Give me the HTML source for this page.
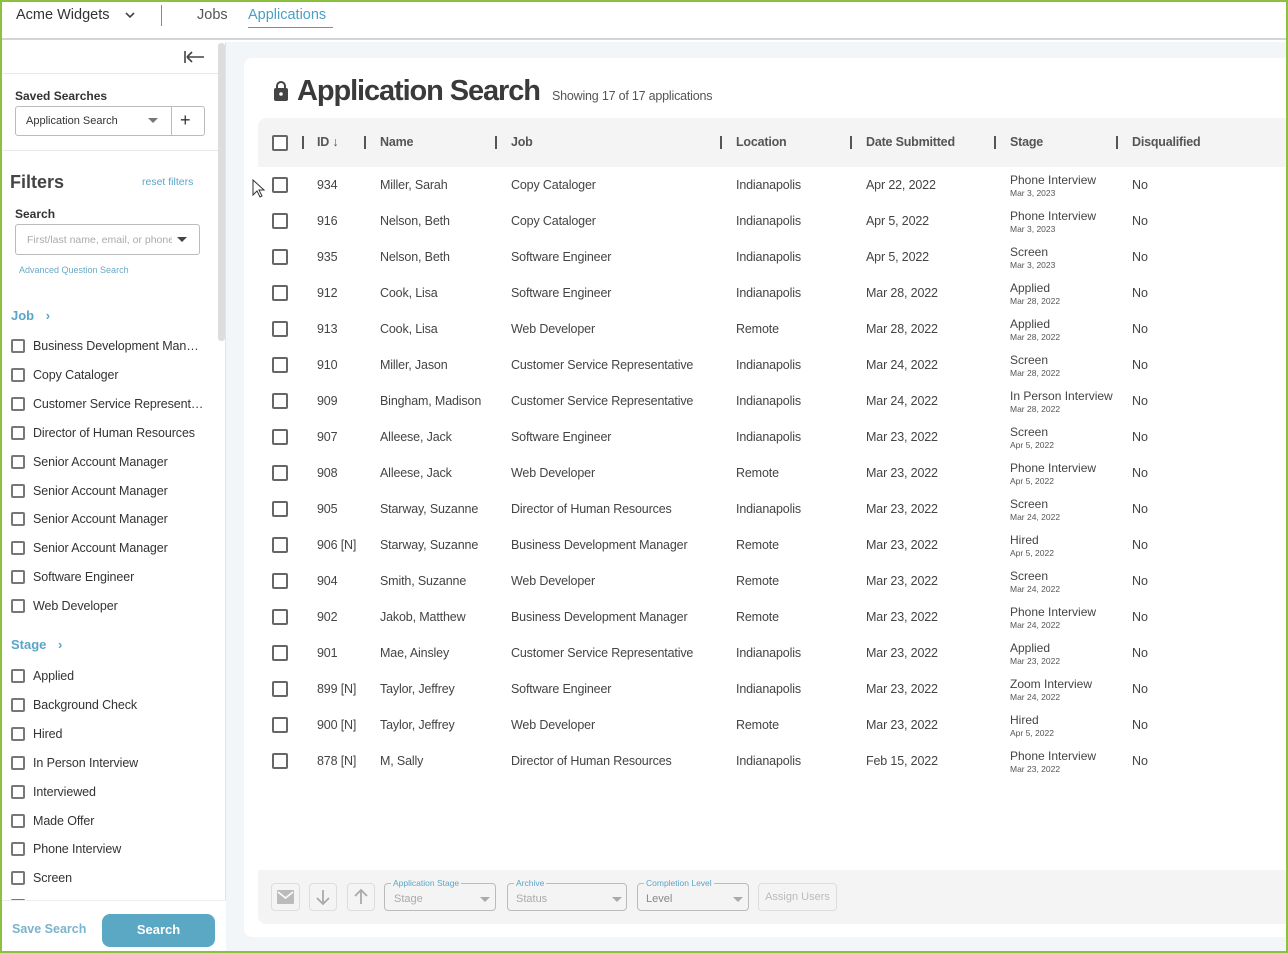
<!DOCTYPE html>
<html><head><meta charset="utf-8"><style>
*{box-sizing:border-box;margin:0;padding:0}
body{width:1288px;height:953px;overflow:hidden;font-family:"Liberation Sans",sans-serif;color:#444;background:#fff;position:relative}
.a{position:absolute;white-space:nowrap}
.frame{position:absolute;left:0;top:0;width:1288px;height:953px;border:2px solid #8cc13f;pointer-events:none;z-index:10}
.cb{position:absolute;width:16px;height:16px;border:2px solid #666;border-radius:2px;background:#fff}
.scb{position:absolute;width:14px;height:14px;border:2px solid #777;border-radius:2px}
.t{font-size:12.5px;color:#444}
.hd{font-size:12.5px;font-weight:bold;color:#555;letter-spacing:-0.2px}
.sep{position:absolute;width:2px;height:13px;background:#555}
.sm{font-size:8.5px;color:#555}
</style></head><body>
<div class="a" style="left:0;top:0;width:1288px;height:40px;background:#fff;border-bottom:2px solid #d4d4d4"></div>
<div class="a" style="left:16px;top:7px;font-size:14.5px;color:#333">Acme Widgets</div>
<svg class="a" style="left:124px;top:10px" width="12" height="10"><path d="M2 3l4 4 4-4" stroke="#444" stroke-width="1.6" fill="none"/></svg>
<div class="a" style="left:161px;top:5px;width:1px;height:21px;background:#4a9fc4"></div>
<div class="a" style="left:197px;top:7px;font-size:14.5px;color:#555">Jobs</div>
<div class="a" style="left:248px;top:7px;font-size:14.5px;color:#4a9fc4">Applications</div>
<div class="a" style="left:248px;top:27px;width:85px;height:1px;background:#4a9fc4"></div>
<div class="a" style="left:226px;top:42px;width:1062px;height:911px;background:#f2f6f8"></div>
<div class="a" style="left:0;top:42px;width:226px;height:911px;background:#fff;border-right:1px solid #e3e3e3"></div>
<div class="a" style="left:218px;top:43px;width:7px;height:298px;background:#ddd;border-radius:3px"></div>
<svg class="a" style="left:183px;top:50px" width="22" height="14"><path d="M2 1v12M4 7h17M4 7l5-5M4 7l5 5" stroke="#444" stroke-width="1.6" fill="none"/></svg>
<div class="a" style="left:2px;top:73px;width:216px;height:1px;background:#e8e8e8"></div>
<div class="a" style="left:15px;top:89px;font-size:12px;font-weight:bold;color:#333">Saved Searches</div>
<div class="a" style="left:15px;top:106px;width:190px;height:30px;border:1px solid #bbb;border-radius:3px"></div>
<div class="a" style="left:171px;top:107px;width:1px;height:28px;background:#bbb"></div>
<div class="a" style="left:26px;top:115px;font-size:11px;color:#333">Application Search</div>
<svg class="a" style="left:148px;top:118px" width="10" height="6"><path d="M0 0h10L5 5z" fill="#777"/></svg>
<div class="a" style="left:180px;top:110px;font-size:18px;color:#333">+</div>
<div class="a" style="left:2px;top:150px;width:216px;height:1px;background:#e8e8e8"></div>
<div class="a" style="left:10px;top:172px;font-size:18px;font-weight:bold;color:#444">Filters</div>
<div class="a" style="left:142px;top:176px;font-size:10.5px;color:#5aa6c8">reset filters</div>
<div class="a" style="left:15px;top:207px;font-size:12px;font-weight:bold;color:#333">Search</div>
<div class="a" style="left:15px;top:224px;width:185px;height:31px;border:1px solid #bbb;border-radius:3px"></div>
<div class="a" style="left:27px;top:234px;font-size:10.5px;color:#aaa;width:145px;overflow:hidden">First/last name, email, or phone</div>
<svg class="a" style="left:177px;top:237px" width="10" height="6"><path d="M0 0h10L5 5z" fill="#444"/></svg>
<div class="a" style="left:19px;top:265px;font-size:9px;color:#6aa9c6">Advanced Question Search</div>
<div class="a" style="left:11px;top:308px;font-size:13px;font-weight:bold;color:#5aa6c8">Job <span style="margin-left:8px">›</span></div>
<div id="jobs"></div>
<div class="a" style="left:11px;top:637px;font-size:13px;font-weight:bold;color:#5aa6c8">Stage <span style="margin-left:8px">›</span></div>
<div class="a" style="left:2px;top:900px;width:224px;height:51px;background:#fff;border-top:1px solid #eee"></div>
<div class="a" style="left:12px;top:922px;font-size:12.5px;font-weight:bold;color:#7ab3cc">Save Search</div>
<div class="a" style="left:102px;top:914px;width:113px;height:33px;background:#5ba8c4;border-radius:8px;color:#fff;font-size:13px;font-weight:bold;text-align:center;line-height:31px">Search</div>
<div class="a" style="left:244px;top:58px;width:1050px;height:879px;background:#fff;border-radius:8px"></div>
<svg class="a" style="left:273px;top:80px" width="16" height="22"><rect x="1" y="8" width="14" height="13" rx="2" fill="#444"/><path d="M4 9V6a4 4 0 0 1 8 0v3" stroke="#444" stroke-width="2" fill="none"/><circle cx="8" cy="14" r="1.8" fill="#fff"/></svg>
<div class="a" style="left:297px;top:75px;font-size:29px;font-weight:bold;color:#3a3a3a;letter-spacing:-1.1px">Application Search</div>
<div class="a" style="left:552px;top:89px;font-size:12.5px;color:#555;letter-spacing:-0.2px">Showing 17 of 17 applications</div>
<div class="a" style="left:258px;top:118px;width:1030px;height:49px;background:#f4f4f4;border-radius:8px 0 0 0"></div>
<div class="a" style="left:258px;top:870px;width:1030px;height:54px;background:#f4f4f4;border-radius:0 0 0 8px"></div>
<div class="cb" style="left:272px;top:135px"></div>
<div class="sep" style="left:302px;top:136px"></div>
<div class="a hd" style="left:317px;top:135px">ID <span style="font-weight:normal">↓</span></div>
<div class="sep" style="left:364px;top:136px"></div><div class="a hd" style="left:380px;top:135px">Name</div>
<div class="sep" style="left:495px;top:136px"></div><div class="a hd" style="left:511px;top:135px">Job</div>
<div class="sep" style="left:720px;top:136px"></div><div class="a hd" style="left:736px;top:135px">Location</div>
<div class="sep" style="left:850px;top:136px"></div><div class="a hd" style="left:866px;top:135px">Date Submitted</div>
<div class="sep" style="left:994px;top:136px"></div><div class="a hd" style="left:1010px;top:135px">Stage</div>
<div class="sep" style="left:1116px;top:136px"></div><div class="a hd" style="left:1132px;top:135px">Disqualified</div>
<div id="rows"></div>
<svg class="a" style="left:252px;top:179px" width="13" height="20"><path d="M1 1v15l4-4 3 6 2-1-3-6h5z" fill="#fff" stroke="#333" stroke-width="1"/></svg>
<div class="a" style="left:271px;top:883px;width:29px;height:28px;border:1px solid #ddd;border-radius:4px"></div>
<svg class="a" style="left:277px;top:890px" width="17" height="14"><rect x="0" y="0" width="17" height="14" rx="1" fill="#bbb"/><path d="M1 2l7.5 6L16 2" stroke="#fff" stroke-width="1.5" fill="none"/></svg>
<div class="a" style="left:309px;top:883px;width:28px;height:28px;border:1px solid #ddd;border-radius:4px"></div>
<svg class="a" style="left:315px;top:888px" width="16" height="18"><path d="M8 2v14M2 10l6 6 6-6" stroke="#aaa" stroke-width="1.8" fill="none"/></svg>
<div class="a" style="left:347px;top:883px;width:28px;height:28px;border:1px solid #ddd;border-radius:4px"></div>
<svg class="a" style="left:353px;top:888px" width="16" height="18"><path d="M8 16V2M2 8l6-6 6 6" stroke="#aaa" stroke-width="1.8" fill="none"/></svg>
<div class="a" style="left:384px;top:883px;width:112px;height:28px;border:1px solid #bbb;border-radius:4px"></div>
<div class="a" style="left:391px;top:878px;font-size:8.5px;color:#5aa6c8;background:#f4f4f4;padding:0 2px">Application Stage</div>
<div class="a" style="left:394px;top:893px;font-size:11px;color:#aaa">Stage</div>
<svg class="a" style="left:480px;top:897px" width="10" height="5"><path d="M0 0h10L5 5z" fill="#aaa"/></svg>
<div class="a" style="left:507px;top:883px;width:120px;height:28px;border:1px solid #bbb;border-radius:4px"></div>
<div class="a" style="left:514px;top:878px;font-size:8.5px;color:#5aa6c8;background:#f4f4f4;padding:0 2px">Archive</div>
<div class="a" style="left:516px;top:893px;font-size:11px;color:#aaa">Status</div>
<svg class="a" style="left:612px;top:897px" width="10" height="5"><path d="M0 0h10L5 5z" fill="#aaa"/></svg>
<div class="a" style="left:637px;top:883px;width:112px;height:28px;border:1px solid #bbb;border-radius:4px"></div>
<div class="a" style="left:644px;top:878px;font-size:8.5px;color:#5aa6c8;background:#f4f4f4;padding:0 2px">Completion Level</div>
<div class="a" style="left:646px;top:893px;font-size:11px;color:#888">Level</div>
<svg class="a" style="left:733px;top:897px" width="10" height="5"><path d="M0 0h10L5 5z" fill="#aaa"/></svg>
<div class="a" style="left:758px;top:883px;width:79px;height:28px;border:1px solid #ddd;border-radius:4px;color:#bbb;font-size:11px;text-align:center;line-height:26px">Assign Users</div>
<div class="frame"></div>
<script>
var jobs=["Business Development Man…","Copy Cataloger","Customer Service Represent…","Director of Human Resources","Senior Account Manager","Senior Account Manager","Senior Account Manager","Senior Account Manager","Software Engineer","Web Developer"];
var stages=["Applied","Background Check","Hired","In Person Interview","Interviewed","Made Offer","Phone Interview","Screen"];
var h="";
function item(t,y){return '<div class="scb" style="left:11px;top:'+(y-7)+'px"></div><div class="a" style="left:33px;top:'+(y-7)+'px;font-size:12.5px;color:#333;letter-spacing:-0.1px">'+t+'</div>';}
jobs.forEach(function(t,i){h+=item(t,346+i*28.9)});
stages.forEach(function(t,i){h+=item(t,676+i*28.9)});
h+='<div class="scb" style="left:11px;top:899px;height:3px;border-bottom:none"></div>';
document.getElementById("jobs").outerHTML=h;
var R=[["934","Miller, Sarah","Copy Cataloger","Indianapolis","Apr 22, 2022","Phone Interview","Mar 3, 2023"],
["916","Nelson, Beth","Copy Cataloger","Indianapolis","Apr 5, 2022","Phone Interview","Mar 3, 2023"],
["935","Nelson, Beth","Software Engineer","Indianapolis","Apr 5, 2022","Screen","Mar 3, 2023"],
["912","Cook, Lisa","Software Engineer","Indianapolis","Mar 28, 2022","Applied","Mar 28, 2022"],
["913","Cook, Lisa","Web Developer","Remote","Mar 28, 2022","Applied","Mar 28, 2022"],
["910","Miller, Jason","Customer Service Representative","Indianapolis","Mar 24, 2022","Screen","Mar 28, 2022"],
["909","Bingham, Madison","Customer Service Representative","Indianapolis","Mar 24, 2022","In Person Interview","Mar 28, 2022"],
["907","Alleese, Jack","Software Engineer","Indianapolis","Mar 23, 2022","Screen","Apr 5, 2022"],
["908","Alleese, Jack","Web Developer","Remote","Mar 23, 2022","Phone Interview","Apr 5, 2022"],
["905","Starway, Suzanne","Director of Human Resources","Indianapolis","Mar 23, 2022","Screen","Mar 24, 2022"],
["906 [N]","Starway, Suzanne","Business Development Manager","Remote","Mar 23, 2022","Hired","Apr 5, 2022"],
["904","Smith, Suzanne","Web Developer","Remote","Mar 23, 2022","Screen","Mar 24, 2022"],
["902","Jakob, Matthew","Business Development Manager","Remote","Mar 23, 2022","Phone Interview","Mar 24, 2022"],
["901","Mae, Ainsley","Customer Service Representative","Indianapolis","Mar 23, 2022","Applied","Mar 23, 2022"],
["899 [N]","Taylor, Jeffrey","Software Engineer","Indianapolis","Mar 23, 2022","Zoom Interview","Mar 24, 2022"],
["900 [N]","Taylor, Jeffrey","Web Developer","Remote","Mar 23, 2022","Hired","Apr 5, 2022"],
["878 [N]","M, Sally","Director of Human Resources","Indianapolis","Feb 15, 2022","Phone Interview","Mar 23, 2022"]];
h="";
R.forEach(function(r,i){var y=185+i*36;
h+='<div class="cb" style="left:272px;top:'+(y-8)+'px"></div>';
var xs=[317,380,511,736,866];
for(var k=0;k<5;k++)h+='<div class="a t" style="left:'+xs[k]+'px;top:'+(y-7)+'px;letter-spacing:-0.15px">'+r[k]+'</div>';
h+='<div class="a t" style="left:1010px;top:'+(y-12)+'px;width:108px;overflow:hidden;font-size:12px">'+r[5]+'</div>';
h+='<div class="a sm" style="left:1010px;top:'+(y+3)+'px">'+r[6]+'</div>';
h+='<div class="a t" style="left:1132px;top:'+(y-7)+'px">No</div>';});
document.getElementById("rows").outerHTML=h;
</script>
</body></html>
